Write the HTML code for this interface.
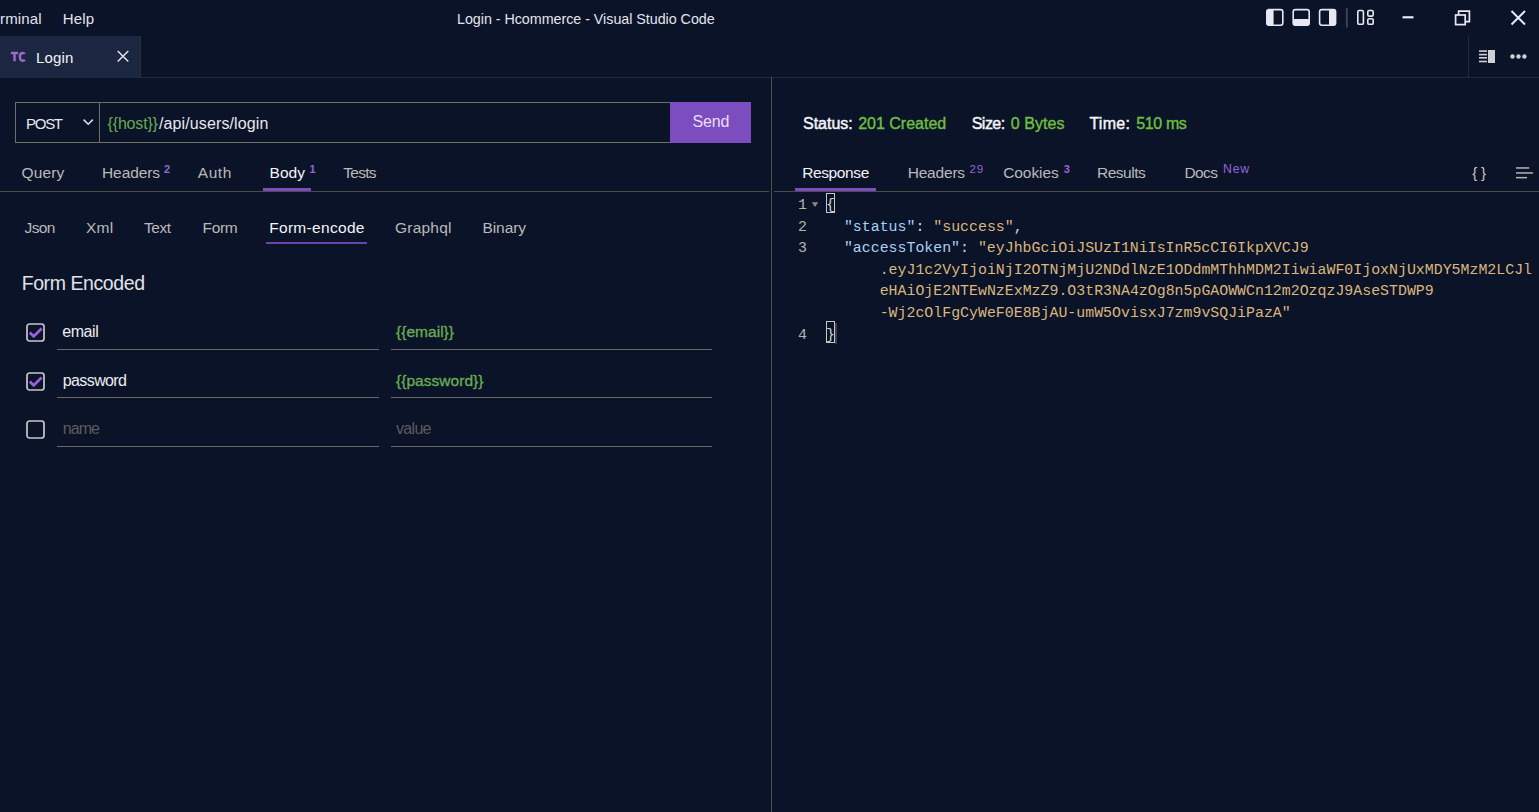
<!DOCTYPE html>
<html><head><meta charset="utf-8"><title>Login - Hcommerce - Visual Studio Code</title>
<style>
html,body{margin:0;padding:0;}
body{width:1539px;height:812px;overflow:hidden;position:relative;background:#0a1327;font-family:"Liberation Sans", sans-serif;}
.t{position:absolute;white-space:pre;line-height:1;}
.r{position:absolute;}
</style></head><body>
<div class="t" style="left:0.00px;top:11.10px;font-size:15px;color:#e4e4ee;letter-spacing:0.138px;">rminal</div>
<div class="t" style="left:62.80px;top:11.10px;font-size:15px;color:#e4e4ee;letter-spacing:0.108px;">Help</div>
<div class="t" style="left:457.00px;top:12.30px;font-size:14.3px;color:#e4e4ee;letter-spacing:-0.029px;">Login - Hcommerce - Visual Studio Code</div>
<svg class="r" style="left:1259px;top:0px" width="280" height="36" viewBox="0 0 280 36">
<g fill="none" stroke="#e8e8f4" stroke-width="1.6">
<rect x="7.8" y="9.6" width="16" height="15.6" rx="2.2"/>
<rect x="34.2" y="9.6" width="16" height="15.6" rx="2.2"/>
<rect x="60.6" y="9.6" width="16" height="15.6" rx="2.2"/>
<rect x="98.8" y="10.5" width="5.6" height="13.8" rx="1.4"/>
<rect x="108.8" y="10.5" width="5.4" height="5.6" rx="1.4"/>
<rect x="108.8" y="18.7" width="5.4" height="5.6" rx="1.4"/>
</g>
<g fill="#e8e8f4">
<rect x="8" y="9.6" width="6.6" height="15.6" rx="1.5"/>
<rect x="34.2" y="19" width="16" height="6.2" rx="1.5"/>
<rect x="70" y="9.6" width="6.6" height="15.6" rx="1.5"/>
<rect x="87.4" y="8" width="1" height="19.6" fill="#6a6a78"/>
<rect x="143.5" y="16.2" width="11" height="2.2"/>
</g>
<g fill="none" stroke="#e8e8f4" stroke-width="1.7">
<rect x="196.6" y="15" width="9.6" height="9.6"/>
<path d="M199.6 15 V11.2 H210.4 V21.6 H206.2"/>
<path d="M252.5 11 L266 24.5 M266 11 L252.5 24.5" stroke-width="2"/>
</g>
</svg>
<div class="r" style="left:0px;top:36px;width:140px;height:41px;background:#1b2640;"></div>
<div class="r" style="left:140px;top:36px;width:1px;height:41px;background:#2a2c3c;"></div>
<div class="r" style="left:0px;top:77px;width:1539px;height:1px;background:#1e2a40;"></div>
<svg class="r" style="left:9px;top:49px" width="20" height="15" viewBox="0 0 20 15"><g fill="none" stroke="#a068c8" stroke-width="2.4"><path d="M1.9 4 H9.2 M5.55 4 V12.2"/><path d="M15.7 4.9 Q15.3 4 13.7 4 Q10.9 4 10.9 7.6 Q10.9 11.8 13.7 11.8 Q15.3 11.8 15.8 10.8"/></g></svg>
<div class="t" style="left:35.90px;top:50.30px;font-size:15px;color:#f4f4f8;letter-spacing:0.178px;">Login</div>
<svg class="r" style="left:112px;top:45px" width="22" height="22" viewBox="0 0 22 22"><path d="M5.7 6 L16.3 16.6 M16.3 6 L5.7 16.6" stroke="#e8e8f0" stroke-width="1.4" fill="none"/></svg>
<div class="r" style="left:1468px;top:36px;width:1px;height:41px;background:#1e2a3e;"></div>
<svg class="r" style="left:1475px;top:46px" width="60" height="22" viewBox="0 0 60 22">
<g fill="#d0d0d8"><rect x="4" y="4.3" width="8" height="1.6"/><rect x="4" y="7.8" width="8" height="1.6"/><rect x="4" y="11" width="8" height="1.6"/><rect x="4" y="14.7" width="8" height="1.6"/>
<rect x="13" y="4" width="7" height="13"/>
<circle cx="37.5" cy="10.5" r="2.2"/><circle cx="43.5" cy="10.5" r="2.2"/><circle cx="49.4" cy="10.5" r="2.2"/></g></svg>
<div class="r" style="left:771px;top:77px;width:1px;height:735px;background:#505050;"></div>
<div class="r" style="left:15px;top:102px;width:655px;height:41px;background:transparent;box-sizing:border-box;border:1px solid #6e6e6a;border-right:none;"></div>
<div class="r" style="left:99px;top:102px;width:1px;height:41px;background:#6e6e6a;"></div>
<div class="t" style="left:26.00px;top:116.30px;font-size:15px;color:#e8e8ee;letter-spacing:-1.271px;">POST</div>
<svg class="r" style="left:80px;top:114px" width="16" height="14" viewBox="0 0 16 14"><path d="M3.6 5.6 L8.2 10.2 L12.8 5.6" stroke="#dcdce0" stroke-width="1.6" fill="none"/></svg>
<div class="t" style="left:107.60px;top:116.06px;font-size:16px;color:#69aa55;letter-spacing:-0.189px;">{{host}}</div>
<div class="t" style="left:159.00px;top:116.06px;font-size:16px;color:#e8e8ee;letter-spacing:0.118px;">/api/users/login</div>
<div class="r" style="left:670px;top:102px;width:81px;height:41px;background:#7b4dbf;"></div>
<div class="t" style="left:692.50px;top:114.16px;font-size:16px;color:#ecdff8;letter-spacing:-0.192px;">Send</div>
<div class="t" style="left:21.40px;top:164.88px;font-size:15.5px;color:#bababa;letter-spacing:0.178px;">Query</div>
<div class="t" style="left:102.00px;top:164.88px;font-size:15.5px;color:#bababa;letter-spacing:-0.094px;">Headers</div>
<div class="t" style="left:164.00px;top:164.49px;font-size:11px;color:#9466d6;font-weight:700;">2</div>
<div class="t" style="left:197.80px;top:164.88px;font-size:15.5px;color:#bababa;letter-spacing:0.542px;">Auth</div>
<div class="t" style="left:269.50px;top:164.88px;font-size:15.5px;color:#f4f4f8;letter-spacing:0.062px;">Body</div>
<div class="t" style="left:309.60px;top:164.49px;font-size:11px;color:#9466d6;font-weight:700;">1</div>
<div class="t" style="left:343.30px;top:164.88px;font-size:15.5px;color:#bababa;letter-spacing:-0.747px;">Tests</div>
<div class="r" style="left:263px;top:188px;width:48px;height:3px;background:#7b4dbf;"></div>
<div class="r" style="left:0px;top:191px;width:769px;height:1px;background:#4b4b4b;"></div>
<div class="t" style="left:24.60px;top:219.88px;font-size:15.5px;color:#bababa;letter-spacing:-0.617px;">Json</div>
<div class="t" style="left:86.00px;top:219.88px;font-size:15.5px;color:#bababa;letter-spacing:0.256px;">Xml</div>
<div class="t" style="left:144.00px;top:219.88px;font-size:15.5px;color:#bababa;letter-spacing:-0.479px;">Text</div>
<div class="t" style="left:202.50px;top:219.88px;font-size:15.5px;color:#bababa;letter-spacing:-0.329px;">Form</div>
<div class="t" style="left:395.00px;top:219.88px;font-size:15.5px;color:#bababa;letter-spacing:0.229px;">Graphql</div>
<div class="t" style="left:482.40px;top:219.88px;font-size:15.5px;color:#bababa;letter-spacing:-0.047px;">Binary</div>
<div class="t" style="left:269.20px;top:219.88px;font-size:15.5px;color:#f4f4f8;letter-spacing:0.311px;">Form-encode</div>
<div class="r" style="left:266px;top:242px;width:101px;height:2px;background:#6a45b0;"></div>
<div class="t" style="left:21.70px;top:274.09px;font-size:19.5px;color:#e2e2ea;letter-spacing:-0.416px;">Form Encoded</div>
<svg class="r" style="left:25px;top:322px" width="22" height="22" viewBox="0 0 22 22"><rect x="2" y="2" width="17" height="17" rx="2.5" fill="none" stroke="#c8c8cc" stroke-width="1.7"/><path d="M4.8 10.6 L8.7 14.4 L16.6 6.6" stroke="#9a62e0" stroke-width="2.8" fill="none"/></svg>
<svg class="r" style="left:25px;top:371px" width="22" height="22" viewBox="0 0 22 22"><rect x="2" y="2" width="17" height="17" rx="2.5" fill="none" stroke="#c8c8cc" stroke-width="1.7"/><path d="M4.8 10.6 L8.7 14.4 L16.6 6.6" stroke="#9a62e0" stroke-width="2.8" fill="none"/></svg>
<svg class="r" style="left:25px;top:419px" width="22" height="22" viewBox="0 0 22 22"><rect x="2" y="2" width="17" height="17" rx="2.5" fill="none" stroke="#c8c8cc" stroke-width="1.7"/></svg>
<div class="t" style="left:62.20px;top:324.46px;font-size:16px;color:#ececf0;letter-spacing:-0.412px;">email</div>
<div class="t" style="left:62.80px;top:373.26px;font-size:16px;color:#ececf0;letter-spacing:-0.614px;">password</div>
<div class="t" style="left:62.80px;top:421.46px;font-size:16px;color:#5c5c5c;letter-spacing:-0.933px;">name</div>
<div class="t" style="left:396.00px;top:324.48px;font-size:15.5px;color:#69aa55;letter-spacing:0.031px;-webkit-text-stroke:0.35px #69aa55;">{{email}}</div>
<div class="t" style="left:396.00px;top:373.48px;font-size:15.5px;color:#69aa55;letter-spacing:0.040px;-webkit-text-stroke:0.35px #69aa55;">{{password}}</div>
<div class="t" style="left:396.00px;top:421.46px;font-size:16px;color:#5c5c5c;letter-spacing:-0.688px;">value</div>
<div class="r" style="left:57px;top:349px;width:322px;height:1px;background:#676767;"></div>
<div class="r" style="left:391px;top:349px;width:321px;height:1px;background:#676767;"></div>
<div class="r" style="left:57px;top:397px;width:322px;height:1px;background:#676767;"></div>
<div class="r" style="left:391px;top:397px;width:321px;height:1px;background:#676767;"></div>
<div class="r" style="left:57px;top:446px;width:322px;height:1px;background:#676767;"></div>
<div class="r" style="left:391px;top:446px;width:321px;height:1px;background:#676767;"></div>
<div class="t" style="left:803.00px;top:115.86px;font-size:16px;color:#f4f4f8;letter-spacing:-0.002px;-webkit-text-stroke:0.45px #f4f4f8;">Status:</div>
<div class="t" style="left:858.20px;top:115.86px;font-size:16px;color:#70be40;letter-spacing:-0.006px;-webkit-text-stroke:0.4px #70be40;">201 Created</div>
<div class="t" style="left:971.70px;top:115.86px;font-size:16px;color:#f4f4f8;letter-spacing:-0.516px;-webkit-text-stroke:0.45px #f4f4f8;">Size:</div>
<div class="t" style="left:1010.70px;top:115.86px;font-size:16px;color:#70be40;letter-spacing:0.071px;-webkit-text-stroke:0.4px #70be40;">0 Bytes</div>
<div class="t" style="left:1089.40px;top:115.86px;font-size:16px;color:#f4f4f8;letter-spacing:0.291px;-webkit-text-stroke:0.45px #f4f4f8;">Time:</div>
<div class="t" style="left:1136.20px;top:115.86px;font-size:16px;color:#70be40;letter-spacing:-0.360px;-webkit-text-stroke:0.4px #70be40;">510 ms</div>
<div class="t" style="left:802.20px;top:164.88px;font-size:15.5px;color:#f4f4f8;letter-spacing:-0.388px;">Response</div>
<div class="t" style="left:907.70px;top:164.88px;font-size:15.5px;color:#bababa;letter-spacing:-0.194px;">Headers</div>
<div class="t" style="left:969.40px;top:163.87px;font-size:11.5px;color:#9466d6;letter-spacing:1.088px;">29</div>
<div class="t" style="left:1003.20px;top:164.88px;font-size:15.5px;color:#bababa;letter-spacing:-0.067px;">Cookies</div>
<div class="t" style="left:1063.70px;top:164.29px;font-size:11px;color:#9466d6;font-weight:700;">3</div>
<div class="t" style="left:1097.00px;top:164.88px;font-size:15.5px;color:#bababa;letter-spacing:-0.481px;">Results</div>
<div class="t" style="left:1184.40px;top:164.88px;font-size:15.5px;color:#bababa;letter-spacing:-0.571px;">Docs</div>
<div class="t" style="left:1223.00px;top:163.29px;font-size:12.3px;color:#9466d6;letter-spacing:0.806px;">New</div>
<div class="r" style="left:795px;top:188px;width:81px;height:3px;background:#7b4dbf;"></div>
<div class="r" style="left:774px;top:191px;width:765px;height:1px;background:#4b4b4b;"></div>
<div class="t" style="left:1472.30px;top:164.80px;font-size:15px;color:#c8c8c8;letter-spacing:-0.294px;">{ }</div>
<svg class="r" style="left:1510px;top:160px" width="29" height="24" viewBox="0 0 29 24"><g fill="#b4b4b4"><rect x="6" y="7.2" width="13.2" height="1.5"/><rect x="6" y="12.2" width="17" height="1.5"/><rect x="6" y="16.9" width="11" height="1.5"/></g></svg>
<div class="t" style="left:798px;top:198.09px;font-family:'Liberation Mono',monospace;font-size:14.9px;color:#b4b4b4">1</div>
<div class="t" style="left:798px;top:219.69px;font-family:'Liberation Mono',monospace;font-size:14.9px;color:#b4b4b4">2</div>
<div class="t" style="left:798px;top:241.29px;font-family:'Liberation Mono',monospace;font-size:14.9px;color:#b4b4b4">3</div>
<div class="t" style="left:798px;top:327.69px;font-family:'Liberation Mono',monospace;font-size:14.9px;color:#b4b4b4">4</div>
<svg class="r" style="left:810px;top:200px" width="10" height="9" viewBox="0 0 10 9"><path d="M1.8 2.3 H8.2 L5 7 Z" fill="#8a8a8a"/></svg>
<div class="t" style="left:826.00px;top:198.09px;font-family:'Liberation Mono',monospace;font-size:14.9px;white-space:pre"><span style="color:#d4d4d4">{</span></div>
<div class="t" style="left:843.90px;top:219.69px;font-family:'Liberation Mono',monospace;font-size:14.9px;white-space:pre"><span style="color:#a9d1f7">&quot;status&quot;</span><span style="color:#d4d4d4">: </span><span style="color:#dcb67c">&quot;success&quot;</span><span style="color:#d4d4d4">,</span></div>
<div class="t" style="left:843.90px;top:241.29px;font-family:'Liberation Mono',monospace;font-size:14.9px;white-space:pre"><span style="color:#a9d1f7">&quot;accessToken&quot;</span><span style="color:#d4d4d4">: </span><span style="color:#dcb67c">&quot;eyJhbGciOiJSUzI1NiIsInR5cCI6IkpXVCJ9</span></div>
<div class="t" style="left:879.70px;top:262.89px;font-family:'Liberation Mono',monospace;font-size:14.9px;white-space:pre"><span style="color:#dcb67c">.eyJ1c2VyIjoiNjI2OTNjMjU2NDdlNzE1ODdmMThhMDM2IiwiaWF0IjoxNjUxMDY5MzM2LCJl</span></div>
<div class="t" style="left:879.70px;top:284.49px;font-family:'Liberation Mono',monospace;font-size:14.9px;white-space:pre"><span style="color:#dcb67c">eHAiOjE2NTEwNzExMzZ9.O3tR3NA4zOg8n5pGAOWWCn12m2OzqzJ9AseSTDWP9</span></div>
<div class="t" style="left:879.70px;top:306.09px;font-family:'Liberation Mono',monospace;font-size:14.9px;white-space:pre"><span style="color:#dcb67c">-Wj2cOlFgCyWeF0E8BjAU-umW5OvisxJ7zm9vSQJiPazA&quot;</span></div>
<div class="t" style="left:826.00px;top:327.69px;font-family:'Liberation Mono',monospace;font-size:14.9px;white-space:pre"><span style="color:#d4d4d4">}</span></div>
<div class="r" style="left:826px;top:193px;width:9px;height:20px;background:transparent;box-sizing:border-box;border:1px solid #c8c8c8;"></div>
<div class="r" style="left:826px;top:321px;width:9px;height:22px;background:transparent;box-sizing:border-box;border:1px solid #c8c8c8;"></div>
<div class="r" style="left:835px;top:323px;width:2px;height:21px;background:#3a4050;"></div>
</body></html>
